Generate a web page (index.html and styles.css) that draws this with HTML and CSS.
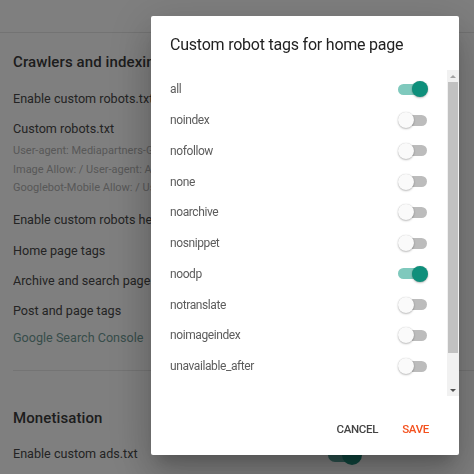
FILE: index.html
```html
<!DOCTYPE html>
<html lang="en">
<head>
<meta charset="utf-8">
<title>Custom robot tags</title>
<link rel="stylesheet" href="styles.css">
</head>
<body>
<div class="page">
  <header class="topbar"></header>
  <main class="settings">
    <h2 class="section-title">Crawlers and indexing</h2>
    <div class="setting first">Enable custom robots.txt</div>
    <div class="setting gap10">Custom robots.txt</div>
    <div class="code">
      <div class="code-line">User-agent: Mediapartners-Google Disallow: User-agent: Googlebot</div>
      <div class="code-line">Image Allow: / User-agent: Adsbot-Google Allow: / User-agent:</div>
      <div class="code-line">Googlebot-Mobile Allow: / User-agent: * Disallow: /search</div>
    </div>
    <div class="setting after-code">Enable custom robots header tags</div>
    <div class="setting gap11">Home page tags</div>
    <div class="setting gap10">Archive and search page tags</div>
    <div class="setting gap10">Post and page tags</div>
    <div class="setting link">Google Search Console</div>
    <hr class="divider">
    <h2 class="section-title mon">Monetisation</h2>
    <div class="toggle-row">
      <span class="setting-label">Enable custom ads.txt</span>
      <span class="bg-switch"><span class="bg-track"></span><span class="bg-knob"></span></span>
    </div>
  </main>
</div>

<div class="overlay"></div>

<div class="dialog" role="dialog">
  <h1 class="dialog-title">Custom robot tags for home page</h1>
  <div class="dialog-body">
    <div class="list">
      <div class="item"><span>all</span><span class="switch on"><span class="track"></span><span class="knob"></span></span></div>
      <div class="item"><span>noindex</span><span class="switch"><span class="track"></span><span class="knob"></span></span></div>
      <div class="item"><span>nofollow</span><span class="switch"><span class="track"></span><span class="knob"></span></span></div>
      <div class="item"><span>none</span><span class="switch"><span class="track"></span><span class="knob"></span></span></div>
      <div class="item"><span>noarchive</span><span class="switch"><span class="track"></span><span class="knob"></span></span></div>
      <div class="item"><span>nosnippet</span><span class="switch"><span class="track"></span><span class="knob"></span></span></div>
      <div class="item"><span>noodp</span><span class="switch on"><span class="track"></span><span class="knob"></span></span></div>
      <div class="item"><span>notranslate</span><span class="switch"><span class="track"></span><span class="knob"></span></span></div>
      <div class="item"><span>noimageindex</span><span class="switch"><span class="track"></span><span class="knob"></span></span></div>
      <div class="item"><span>unavailable_after</span><span class="switch"><span class="track"></span><span class="knob"></span></span></div>
    </div>
    <div class="scrollbar">
      <div class="arrow up"></div>
      <div class="thumb-area"><div class="thumb"></div></div>
      <div class="arrow down"></div>
    </div>
  </div>
  <div class="dialog-actions">
    <button class="btn cancel">Cancel</button>
    <button class="btn save">Save</button>
  </div>
</div>
</body>
</html>
```

FILE: styles.css
```css
* { box-sizing: border-box; }

html, body {
  margin: 0;
  padding: 0;
  width: 474px;
  height: 474px;
  overflow: hidden;
  background: #ffffff;
  font-family: Roboto, "Liberation Sans", Arial, sans-serif;
}

.page {
  width: 474px;
  height: 474px;
  overflow: hidden;
}

.topbar {
  height: 33px;
  border-bottom: 1px solid #e6e6e6;
}

.settings {
  padding: 0 112px 0 13px;
}

.section-title {
  margin: 19px 0 0;
  max-width: 138px;
  overflow: hidden;
  font-size: 15px;
  line-height: 20px;
  font-weight: 500;
  color: #3a3a3a;
  letter-spacing: 0.1px;
  white-space: nowrap;
}

.setting,
.setting-label {
  display: block;
  max-width: 138px;
  overflow: hidden;
  font-size: 12.6px;
  line-height: 20px;
  height: 20px;
  color: #484848;
  white-space: nowrap;
}

.setting.first { margin-top: 17px; }
.setting.gap10 { margin-top: 10px; }
.setting.gap11 { margin-top: 11px; }
.setting.after-code { margin-top: 12.5px; }
.setting.link { margin-top: 7px; color: #6f9a95; }

.code {
  margin-top: 3px;
  font-size: 11px;
  line-height: 18.5px;
  color: #b0b0b0;
}

.code-line {
  max-width: 138px;
  overflow: hidden;
  white-space: nowrap;
}

.divider {
  margin: 22px -112px 0 0;
  border: 0;
  border-top: 1px solid #e8e8e8;
  height: 0;
}

.section-title.mon { margin-top: 37px; }

.toggle-row {
  margin-top: 16px;
  display: flex;
  justify-content: space-between;
  align-items: center;
  height: 20px;
}

.bg-switch {
  position: relative;
  width: 34px;
  height: 20px;
  flex: none;
  margin-top: 2px;
}
.bg-track {
  position: absolute;
  left: 0; top: 3px;
  width: 32px; height: 14px;
  border-radius: 7px;
  background: #58a59c;
}
.bg-knob {
  position: absolute;
  right: 0; top: 0;
  width: 20px; height: 20px;
  border-radius: 50%;
  background: #1e8c7c;
}

.overlay {
  position: fixed;
  inset: 0;
  background: rgba(0, 0, 0, 0.5);
}

.dialog {
  position: fixed;
  left: 151px;
  top: 16px;
  width: 308px;
  height: 439px;
  background: #ffffff;
  border-radius: 2px;
  box-shadow: 0 11px 15px -7px rgba(0,0,0,.2), 0 24px 38px 3px rgba(0,0,0,.14), 0 9px 46px 8px rgba(0,0,0,.12);
  display: flex;
  flex-direction: column;
}

.dialog-title {
  margin: 0;
  padding: 19px 19px 0;
  height: 54px;
  font-size: 16px;
  line-height: 20px;
  font-weight: 400;
  letter-spacing: -0.22px;
  color: #222222;
}

.dialog-body {
  display: flex;
  height: 326px;
  flex: none;
}

.list {
  flex: 1;
  padding: 4px 19px 0 19px;
  overflow: hidden;
}

.item {
  height: 30.75px;
  display: flex;
  align-items: center;
  justify-content: space-between;
  font-size: 12px;
  letter-spacing: -0.4px;
  color: #5c5c5c;
}

.switch {
  position: relative;
  width: 30px;
  height: 16px;
  flex: none;
}
.switch .track {
  position: absolute;
  left: 1px; top: 2.5px;
  width: 28px; height: 11px;
  border-radius: 6px;
  background: #bcbcbc;
}
.switch .knob {
  position: absolute;
  left: 0; top: 0;
  width: 16px; height: 16px;
  border-radius: 50%;
  background: #fafafa;
  box-shadow: 0 1px 2px rgba(0,0,0,.25), 0 0 1px rgba(0,0,0,.2);
}
.switch.on .track { background: #7fc9bd; left: 0; width: 26px; }
.switch.on .knob { left: 14px; background: #0e8f7b; }

.scrollbar {
  width: 12px;
  flex: none;
  background: #f1f1f1;
  display: flex;
  flex-direction: column;
}
.arrow {
  height: 12px;
  display: flex;
  align-items: center;
  justify-content: center;
}
.arrow::before {
  content: "";
  width: 0; height: 0;
  border-left: 3px solid transparent;
  border-right: 3px solid transparent;
}
.arrow.up::before { border-bottom: 3px solid #a3a3a3; }
.arrow.down::before { border-top: 3px solid #505050; }
.thumb-area {
  flex: 1;
  padding: 0 1px;
}
.thumb {
  height: 271px;
  background: #c1c1c1;
}

.dialog-actions {
  flex: 1;
  display: flex;
  justify-content: flex-end;
  align-items: center;
  gap: 8px;
  padding: 6px 22px 0 0;
}

.btn {
  border: 0;
  background: transparent;
  padding: 8px;
  font-family: Roboto, "Liberation Sans", Arial, sans-serif;
  font-size: 11.5px;
  font-weight: 500;
  letter-spacing: -0.3px;
  text-transform: uppercase;
  line-height: 16px;
  cursor: pointer;
}
.btn.cancel { color: #444444; }
.btn.save { color: #f4511e; }
```
